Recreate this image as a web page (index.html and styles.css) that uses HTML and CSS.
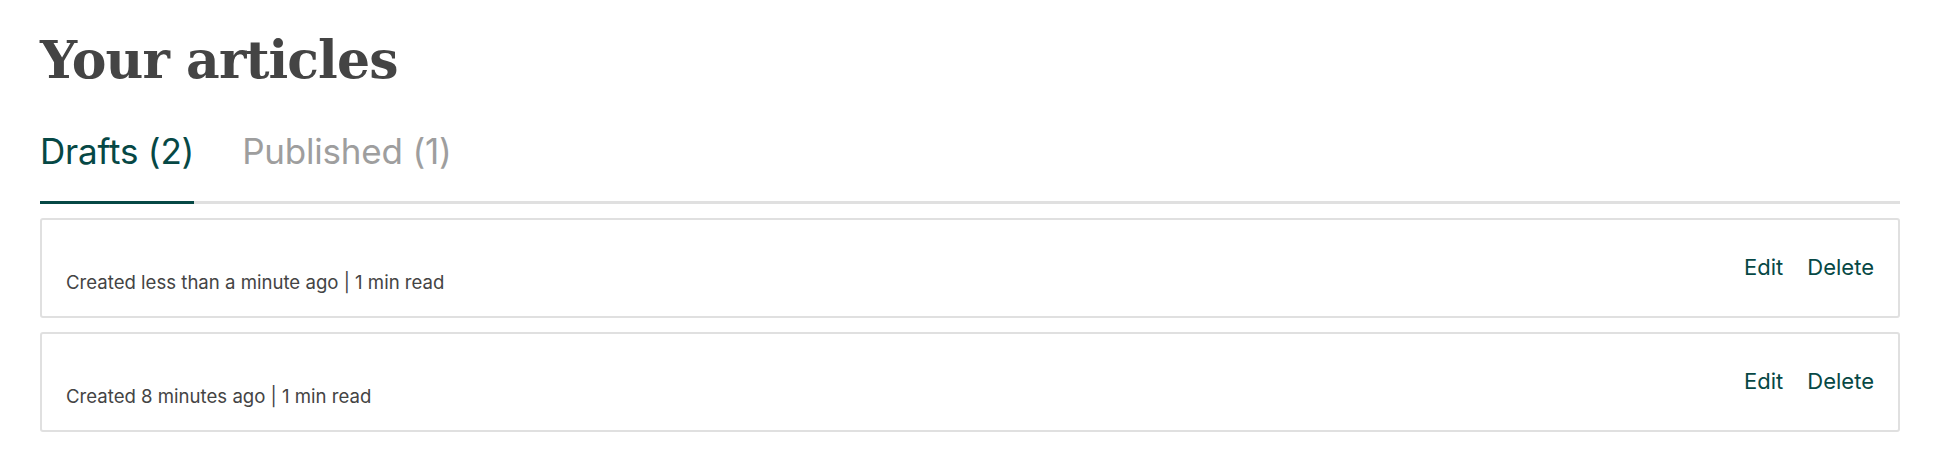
FILE: index.html
```html
<!DOCTYPE html>
<html lang="en">
<head>
<meta charset="utf-8">
<title>Your articles</title>
<link rel="stylesheet" href="styles.css">
</head>
<body>
<main class="page">
  <h1 class="page-title">Your articles</h1>
  <nav class="tabs">
    <a class="tab tab-active" href="#">Drafts (2)</a>
    <a class="tab" href="#">Published (1)</a>
  </nav>
  <ul class="article-list">
    <li class="article-card">
      <div class="article-info">
        <div class="article-title"></div>
        <div class="article-meta">Created less than a minute ago | 1 min read</div>
      </div>
      <div class="article-actions">
        <a class="action" href="#">Edit</a>
        <a class="action" href="#">Delete</a>
      </div>
    </li>
    <li class="article-card">
      <div class="article-info">
        <div class="article-title"></div>
        <div class="article-meta">Created 8 minutes ago | 1 min read</div>
      </div>
      <div class="article-actions">
        <a class="action" href="#">Edit</a>
        <a class="action" href="#">Delete</a>
      </div>
    </li>
  </ul>
</main>
</body>
</html>
```
FILE: styles.css
```css
* { box-sizing: border-box; }
html, body { margin: 0; padding: 0; background: #fff; }
body { font-family: Inter, "Noto Sans", sans-serif; color: #444; }

.page {
  padding: 0 34px 0 40px;
}

.page-title {
  margin: 0;
  padding-top: 27px;
  font-family: "DejaVu Serif", Georgia, serif;
  font-weight: bold;
  font-size: 52px;
  line-height: 66px;
  color: #444;
  letter-spacing: -0.9px;
}

.tabs {
  display: flex;
  gap: 48px;
  margin-top: 37px;
  border-bottom: 3px solid #e0e0e0;
}

.tab {
  display: block;
  font-size: 35px;
  line-height: 42px;
  padding-bottom: 29px;
  margin-bottom: -3px;
  border-bottom: 3px solid transparent;
  color: #9e9e9e;
  text-decoration: none;
  letter-spacing: -0.2px;
}

.tab-active {
  color: #064845;
  border-bottom-color: #064845;
}

.article-list {
  list-style: none;
  margin: 14px 0 0;
  padding: 0;
  display: flex;
  flex-direction: column;
  gap: 14px;
}

.article-card {
  display: flex;
  justify-content: space-between;
  align-items: center;
  border: 2px solid #e0e0e0;
  border-radius: 3px;
  padding: 20px 24px 22px 24px;
}

.article-title {
  height: 30px;
}

.article-meta {
  font-size: 18.6px;
  line-height: 24px;
  color: #444;
}

.article-actions {
  display: flex;
  gap: 24px;
}

.action {
  font-size: 22px;
  line-height: 24px;
  color: #064845;
  text-decoration: none;
}
```
